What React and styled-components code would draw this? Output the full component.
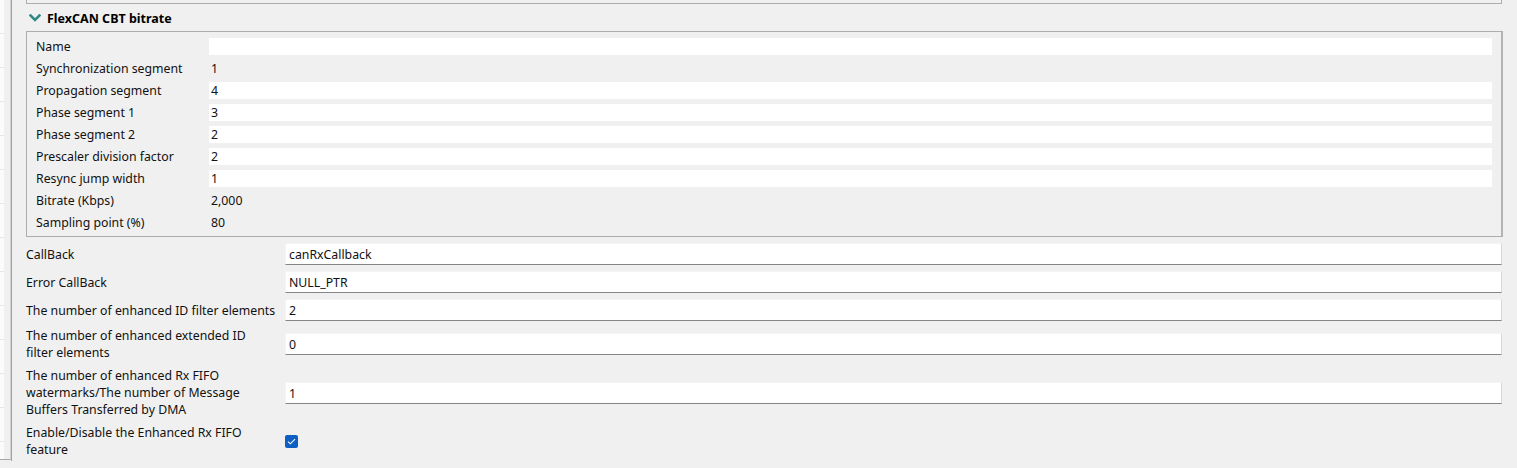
import React from 'react';
import styled, { createGlobalStyle } from 'styled-components';

const GlobalStyle = createGlobalStyle`
  body {
    margin: 0;
    background: #f0f0f0;
    font-family: "Noto Sans", "Open Sans", sans-serif;
    font-size: 12.3px;
    color: #111;
  }
`;

const bitrateRows = [
  { label: 'Name', value: '', editable: true },
  { label: 'Synchronization segment', value: '1' },
  { label: 'Propagation segment', value: '4', editable: true },
  { label: 'Phase segment 1', value: '3', editable: true },
  { label: 'Phase segment 2', value: '2', editable: true },
  { label: 'Prescaler division factor', value: '2', editable: true },
  { label: 'Resync jump width', value: '1', editable: true },
  { label: 'Bitrate (Kbps)', value: '2,000' },
  { label: 'Sampling point (%)', value: '80' },
];

// label lines are split the way the tool wraps them
const settings = [
  { lines: ['CallBack'], value: 'canRxCallback' },
  { lines: ['Error CallBack'], value: 'NULL_PTR' },
  { lines: ['The number of enhanced ID filter elements'], value: '2' },
  { lines: ['The number of enhanced extended ID', 'filter elements'], value: '0' },
  {
    lines: [
      'The number of enhanced Rx FIFO',
      'watermarks/The number of Message',
      'Buffers Transferred by DMA',
    ],
    value: '1',
  },
  { lines: ['Enable/Disable the Enhanced Rx FIFO', 'feature'], checkbox: true },
];

const Chevron = () => (
  <svg width="12" height="8" viewBox="0 0 12 8">
    <polyline
      points="1.5,1.5 6,6 10.5,1.5"
      fill="none"
      stroke="#2f8a85"
      strokeWidth="2.6"
      strokeLinecap="square"
    />
  </svg>
);

const CheckIcon = () => (
  <svg width="9" height="7" viewBox="0 0 9 7">
    <polyline points="1,3.6 3.4,5.8 8,1.2" fill="none" stroke="#fff" strokeWidth="1.1" />
  </svg>
);

export default function App() {
  return (
    <>
      <GlobalStyle />
      <Page>
        <SideStrip>
          <SideList />
        </SideStrip>
        <Main>
          <TopBox />
          <SectionHeader>
            <Chevron />
            <Title>FlexCAN CBT bitrate</Title>
          </SectionHeader>
          <GroupBox>
            {bitrateRows.map(row => (
              <BitrateRow key={row.label}>
                <BitrateLabel>{row.label}</BitrateLabel>
                <BitrateValue editable={row.editable}>{row.value}</BitrateValue>
              </BitrateRow>
            ))}
          </GroupBox>
          <SettingsList>
            {settings.map(item => (
              <SettingRow key={item.lines[0]}>
                <SettingLabel>
                  {item.lines.map(line => (
                    <LabelLine key={line}>{line}</LabelLine>
                  ))}
                </SettingLabel>
                {item.checkbox ? (
                  <Checkbox>
                    <CheckIcon />
                  </Checkbox>
                ) : (
                  <TextField>{item.value}</TextField>
                )}
              </SettingRow>
            ))}
          </SettingsList>
        </Main>
      </Page>
    </>
  );
}

const Page = styled.div`
  display: flex;
  height: 468px;
  overflow: hidden;
`;

const SideStrip = styled.div`
  flex: none;
  width: 11px;
  height: 461px;
  border-right: 1px solid #a0a0a0;
  display: flex;
`;

const SideList = styled.div`
  width: 3px;
  height: 459px;
  background: repeating-linear-gradient(
    to bottom,
    #fbfbfb 0px,
    #fbfbfb 33px,
    #e6e6e6 33px,
    #e6e6e6 34px
  );
  border-right: 1px solid #d4d4d4;
  border-bottom: 1px solid #a8a8a8;
  padding-right: 7px;
  background-size: 4px 100%;
  background-repeat: no-repeat;
`;

const Main = styled.div`
  flex: 1;
  padding: 0 14px;
  display: flex;
  flex-direction: column;
`;

const TopBox = styled.div`
  height: 3px;
  border: 1px solid #adadad;
  border-top: none;
  margin-right: 1px;
`;

const SectionHeader = styled.div`
  height: 27px;
  display: flex;
  align-items: center;
  gap: 6px;
  padding-left: 3px;
  padding-top: 1px;
  box-sizing: border-box;
`;

const Title = styled.span`
  font-weight: 700;
  font-size: 12.5px;
  color: #000;
`;

const GroupBox = styled.div`
  border: 1px solid #adadad;
  border-right: 2px solid #b4b4b4;
  padding: 5px 9px 0 9px;
  height: 199px;
`;

const BitrateRow = styled.div`
  display: grid;
  grid-template-columns: 173px 1fr;
  height: 17px;
  margin-bottom: 5px;
  align-items: center;
`;

const BitrateLabel = styled.span`
  line-height: 17px;
  padding-top: 1px;
`;

const BitrateValue = styled.div`
  height: 17px;
  line-height: 18px;
  padding-left: 2px;
  background: ${p => (p.editable ? '#ffffff' : 'transparent')};
`;

const SettingsList = styled.div`
  margin-top: 6px;
  display: flex;
  flex-direction: column;
  gap: 6px;
`;

const SettingRow = styled.div`
  display: grid;
  grid-template-columns: 259px 1fr;
  align-items: center;
  min-height: 22px;
`;

const SettingLabel = styled.div`
  display: flex;
  flex-direction: column;
`;

const LabelLine = styled.span`
  line-height: 17px;
  white-space: nowrap;
`;

const TextField = styled.div`
  height: 22px;
  box-sizing: border-box;
  line-height: 21px;
  padding-left: 3px;
  background: #fff;
  border: 1px solid #f4f4f4;
  border-bottom-color: #858585;
  border-right-color: #d9d9d9;
  margin-right: 1px;
`;

const Checkbox = styled.div`
  width: 13px;
  height: 13px;
  border-radius: 2px;
  background: #0d5fc3;
  display: flex;
  align-items: center;
  justify-content: center;
`;
